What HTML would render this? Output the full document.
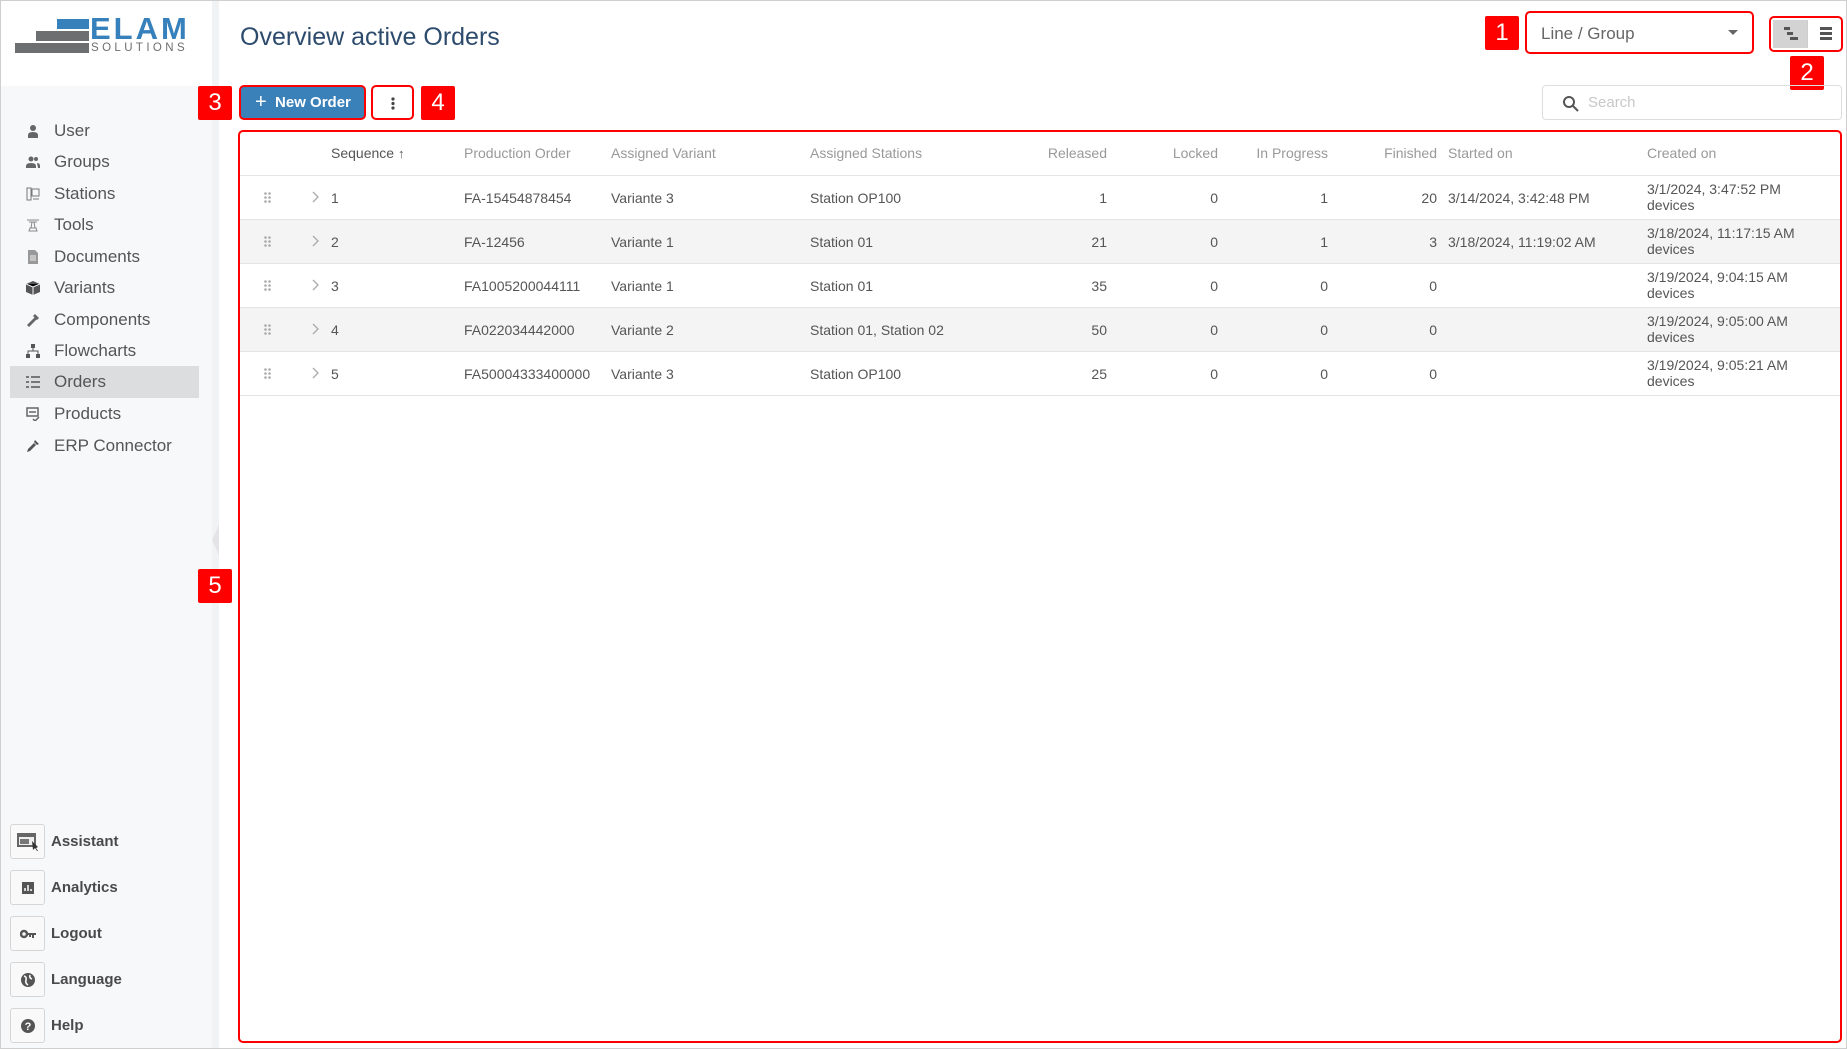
<!DOCTYPE html>
<html><head><meta charset="utf-8"><style>
*{box-sizing:border-box;margin:0;padding:0}
body{width:1847px;height:1049px;position:relative;overflow:hidden;background:#fff;font-family:"Liberation Sans",sans-serif;color:#555}
.abs{position:absolute}
#frame{position:absolute;left:0;top:0;width:1847px;height:1049px;border:1px solid #cfcfcf;pointer-events:none;z-index:9}
#side{left:1px;top:86px;width:211px;height:962px;background:#f7f8fa}
#strip{left:212px;top:1px;width:7px;height:1047px;background:#f1f2f4}
.mi{position:absolute;left:10px;width:189px;height:32px;font-size:17px;color:#555;line-height:32px;padding-left:44px}
.mi .ic{position:absolute;left:16px;top:9px;width:14px;height:14px}
.sel{background:#dcdddf}
.lbl{position:absolute;width:34px;height:34px;background:#f00;color:#fff;font-size:24px;text-align:center;line-height:34px;border-radius:2px}
.bb{position:absolute;left:10px;width:35px;height:35px;border:1px solid #d6d6d6;border-radius:3px;background:#f9f9f9}
.bt{position:absolute;left:51px;font-size:15px;font-weight:bold;color:#4a4a4a}
.th{position:absolute;top:145px;font-size:14px;color:#999}
.row{position:absolute;left:240px;width:1600px;height:44px;border-bottom:1px solid #e4e4e4;font-size:14px;color:#555}
.row div{position:absolute;top:14px;white-space:nowrap}
.row .r{text-align:right}
.alt{background:#f4f4f4}
</style></head><body>
<div id="frame"></div>
<div class="abs" id="side"></div>
<div class="abs" id="strip"></div>
<div class="abs" style="left:212px;top:525px;width:0;height:0;border-top:15px solid transparent;border-bottom:15px solid transparent;border-right:7px solid #e4e4e6"></div>

<!-- logo -->
<div class="abs" style="left:15px;top:43px;width:74px;height:10px;background:#6d6e70"></div>
<div class="abs" style="left:36px;top:31px;width:53px;height:10px;background:#6d6e70"></div>
<div class="abs" style="left:57px;top:19px;width:32px;height:10px;background:#3680bc"></div>
<div class="abs" style="left:90px;top:13px;font-size:31px;font-weight:bold;color:#3680bc;letter-spacing:3px;line-height:32px">ELAM</div>
<div class="abs" style="left:91px;top:42px;font-size:11.5px;color:#6d6e70;letter-spacing:3.4px;line-height:12px">SOLUTIONS</div>

<!-- menu -->
<div class="mi" style="top:115px"><svg class="ic" viewBox="0 0 14 14"><circle cx="7" cy="4" r="3" fill="#666"/><path d="M2 14v-3q0-3 5-3t5 3v3z" fill="#666"/></svg>User</div>
<div class="mi" style="top:146px"><svg class="ic" viewBox="0 0 14 14"><circle cx="5" cy="4" r="2.5" fill="#666"/><circle cx="10" cy="4" r="2" fill="#666"/><path d="M0 13v-2q0-3 5-3t5 3v2z" fill="#666"/><path d="M11 8q3 0 3 3v2h-2" fill="#666"/></svg>Groups</div>
<div class="mi" style="top:178px"><svg class="ic" viewBox="0 0 14 14" fill="none" stroke="#777"><rect x="1" y="1" width="4" height="12"/><rect x="6" y="2" width="7" height="7"/><path d="M7 12h6"/></svg>Stations</div>
<div class="mi" style="top:209px"><svg class="ic" viewBox="0 0 14 14" fill="none" stroke="#888"><path d="M1 2h12M3 4h8M6 4l-1 6M8 4l1 6M3 13h8l-1-3H4z"/></svg>Tools</div>
<div class="mi" style="top:241px"><svg class="ic" viewBox="0 0 14 14"><path d="M2 0h7l3 3v11H2z" fill="#999"/><path d="M4 6h6M4 8h6M4 10h6" stroke="#eee"/></svg>Documents</div>
<div class="mi" style="top:272px"><svg class="ic" viewBox="0 0 14 14"><path d="M7 0l7 3v8l-7 3-7-3V3z" fill="#555"/><path d="M0 3l7 3 7-3M7 6v8" stroke="#f7f8fa"/></svg>Variants</div>
<div class="mi" style="top:304px"><svg class="ic" viewBox="0 0 14 14"><path d="M1 12l8-8 2 2-8 8z M9 1l4 4-2 2-4-4z" fill="#666"/></svg>Components</div>
<div class="mi" style="top:335px"><svg class="ic" viewBox="0 0 14 14" fill="#555"><rect x="5" y="0" width="4" height="4"/><rect x="0" y="10" width="4" height="4"/><rect x="10" y="10" width="4" height="4"/><path d="M7 4v3M2 10V7h10v3" stroke="#555" fill="none"/></svg>Flowcharts</div>
<div class="mi sel" style="top:366px"><svg class="ic" viewBox="0 0 14 14" fill="#777"><rect x="0" y="1" width="3" height="2"/><rect x="0" y="6" width="3" height="2"/><rect x="0" y="11" width="3" height="2"/><rect x="5" y="1" width="9" height="2"/><rect x="5" y="6" width="9" height="2"/><rect x="5" y="11" width="9" height="2"/></svg>Orders</div>
<div class="mi" style="top:398px"><svg class="ic" viewBox="0 0 14 14" fill="none" stroke="#666" stroke-width="1.5"><rect x="1" y="1" width="11" height="8"/><path d="M3 5h7M7 12l2 2 4-4"/></svg>Products</div>
<div class="mi" style="top:430px"><svg class="ic" viewBox="0 0 14 14"><path d="M1 13l3-1 6-6-2-2-6 6z M9 1l4 4-2 1-3-3z" fill="#555"/></svg>ERP Connector</div>

<!-- bottom -->
<div class="bb" style="top:824px"><svg style="position:absolute;left:6px;top:8px" width="22" height="18" viewBox="0 0 22 18"><rect x="0" y="0" width="19" height="14" fill="#666"/><rect x="2" y="4" width="15" height="8" fill="#eee"/><rect x="3" y="6" width="9" height="5" fill="#777"/><path d="M15 8l6 6-2 1 2 3-1 0-2-3-2 2z" fill="#333"/></svg></div><div class="bt" style="top:833px">Assistant</div>
<div class="bb" style="top:870px"><svg style="position:absolute;left:11px;top:11px" width="12" height="12"><rect width="12" height="12" fill="#555"/><path d="M3 9V6M6 9V3M9 9V7" stroke="#fff" stroke-width="1.5"/></svg></div><div class="bt" style="top:879px">Analytics</div>
<div class="bb" style="top:916px"><svg style="position:absolute;left:9px;top:12px" width="17" height="10"><circle cx="4" cy="5" r="3" fill="none" stroke="#555" stroke-width="2.5"/><path d="M7 4h9v2h-2v3h-2V6h-1v2H9V6H7z" fill="#555"/></svg></div><div class="bt" style="top:925px">Logout</div>
<div class="bb" style="top:962px"><svg style="position:absolute;left:10px;top:10px" width="14" height="14"><circle cx="7" cy="7" r="7" fill="#555"/><path d="M3 3q3 1 2 4t2 5M9 2q-1 3 2 4" stroke="#f9f9f9" stroke-width="1.6" fill="none"/></svg></div><div class="bt" style="top:971px">Language</div>
<div class="bb" style="top:1008px"><svg style="position:absolute;left:10px;top:10px" width="14" height="14"><circle cx="7" cy="7" r="7" fill="#555"/><text x="7" y="11" font-size="11" font-weight="bold" fill="#fff" text-anchor="middle" font-family="Liberation Sans">?</text></svg></div><div class="bt" style="top:1017px">Help</div>

<!-- header -->
<div class="abs" style="left:240px;top:23px;font-size:25px;color:#2d4b6c">Overview active Orders</div>
<div class="lbl" style="left:1485px;top:16px">1</div>
<div class="abs" style="left:1525px;top:11px;width:229px;height:43px;border:2px solid #f00;border-radius:5px"></div>
<div class="abs" style="left:1541px;top:24px;font-size:17px;color:#666">Line / Group</div>
<div class="abs" style="left:1728px;top:30px;border-left:5px solid transparent;border-right:5px solid transparent;border-top:5px solid #666"></div>
<div class="abs" style="left:1769px;top:16px;width:74px;height:36px;border:2px solid #f00;border-radius:5px;overflow:hidden;background:#fff"><div style="position:absolute;left:2px;top:2px;width:34px;height:28px;background:#d3d3d3"></div><div style="position:absolute;left:36px;top:2px;width:1px;height:28px;background:#ccc"></div>
<svg style="position:absolute;left:13px;top:9px" width="14" height="13" fill="#555"><rect x="0" y="0" width="6" height="3"/><rect x="3" y="5" width="6" height="3"/><rect x="6" y="10" width="8" height="3"/></svg>
<svg style="position:absolute;left:49px;top:9px" width="12" height="13" fill="#555"><rect y="0" width="12" height="3"/><rect y="5" width="12" height="3"/><rect y="10" width="12" height="3"/></svg></div>
<div class="lbl" style="left:1790px;top:56px">2</div>

<div class="lbl" style="left:198px;top:86px">3</div>
<div class="abs" style="left:239px;top:85px;width:127px;height:35px;border:2px solid #f00;border-radius:5px;background:#3a80b9;color:#fff;font-size:15px;font-weight:bold;line-height:31px;padding-left:14px"><span style="font-size:20px;font-weight:normal;vertical-align:-1px">+</span>&nbsp;&nbsp;New Order</div>
<div class="abs" style="left:371px;top:85px;width:43px;height:35px;border:2px solid #f00;border-radius:5px;background:#fff"><svg style="position:absolute;left:18px;top:10px" width="4" height="13" fill="#444"><circle cx="2" cy="2" r="1.6"/><circle cx="2" cy="6.5" r="1.6"/><circle cx="2" cy="11" r="1.6"/></svg></div>
<div class="lbl" style="left:421px;top:86px">4</div>
<div class="abs" style="left:1542px;top:85px;width:300px;height:35px;border:1px solid #ddd;border-radius:4px"><svg style="position:absolute;left:19px;top:9px" width="18" height="18" fill="none" stroke="#555" stroke-width="2"><circle cx="7" cy="7" r="5"/><path d="M11 11l5 5"/></svg><span style="position:absolute;left:45px;top:8px;font-size:15px;color:#c8c8c8">Search</span></div>
<div class="lbl" style="left:198px;top:569px">5</div>

<!-- table -->
<div class="abs" style="left:238px;top:130px;width:1604px;height:913px;border:2px solid #f00;border-radius:5px;z-index:5"></div>
<div class="abs" style="left:240px;top:175px;width:1600px;height:1px;background:#e4e4e4"></div>
<div class="th" style="left:331px;color:#555">Sequence <span style="font-size:13px">&#8593;</span></div>
<div class="th" style="left:464px">Production Order</div>
<div class="th" style="left:611px">Assigned Variant</div>
<div class="th" style="left:810px">Assigned Stations</div>
<div class="th" style="right:740px">Released</div>
<div class="th" style="right:629px">Locked</div>
<div class="th" style="right:519px">In Progress</div>
<div class="th" style="right:410px">Finished</div>
<div class="th" style="left:1448px">Started on</div>
<div class="th" style="left:1647px">Created on</div>

<div id="rows"></div>
<script>
var d=[["1","FA-15454878454","Variante 3","Station OP100","1","0","1","20","3/14/2024, 3:42:48 PM","3/1/2024, 3:47:52 PM"],
["2","FA-12456","Variante 1","Station 01","21","0","1","3","3/18/2024, 11:19:02 AM","3/18/2024, 11:17:15 AM"],
["3","FA1005200044111","Variante 1","Station 01","35","0","0","0","","3/19/2024, 9:04:15 AM"],
["4","FA022034442000","Variante 2","Station 01, Station 02","50","0","0","0","","3/19/2024, 9:05:00 AM"],
["5","FA50004333400000","Variante 3","Station OP100","25","0","0","0","","3/19/2024, 9:05:21 AM"]];
var h="";
d.forEach(function(r,i){
h+='<div class="row'+(i%2?' alt':'')+'" style="top:'+(176+i*44)+'px">'+
'<svg style="position:absolute;left:24px;top:16px" width="8" height="12" fill="#aaa"><circle cx="1.5" cy="1.5" r="1.3"/><circle cx="5.5" cy="1.5" r="1.3"/><circle cx="1.5" cy="5.5" r="1.3"/><circle cx="5.5" cy="5.5" r="1.3"/><circle cx="1.5" cy="9.5" r="1.3"/><circle cx="5.5" cy="9.5" r="1.3"/></svg>'+
'<svg style="position:absolute;left:72px;top:15px" width="7" height="12" fill="none" stroke="#aaa" stroke-width="1.3"><path d="M1 1l5 5-5 5"/></svg>'+
'<div style="left:91px">'+r[0]+'</div><div style="left:224px">'+r[1]+'</div><div style="left:371px">'+r[2]+'</div><div style="left:570px">'+r[3]+'</div>'+
'<div class="r" style="right:733px">'+r[4]+'</div><div class="r" style="right:622px">'+r[5]+'</div><div class="r" style="right:512px">'+r[6]+'</div><div class="r" style="right:403px">'+r[7]+'</div>'+
'<div style="left:1208px">'+r[8]+'</div><div style="left:1407px;top:5px;line-height:16px">'+r[9]+'<br>devices</div></div>';
});
document.getElementById("rows").innerHTML=h;
</script>
</body></html>
